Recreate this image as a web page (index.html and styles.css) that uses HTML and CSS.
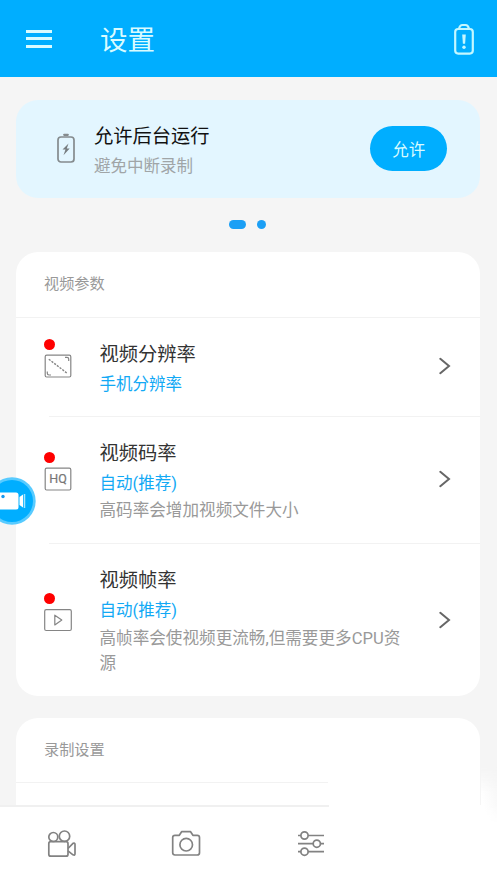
FILE: index.html
```html
<!DOCTYPE html>
<html lang="zh-CN">
<head>
<meta charset="utf-8">
<meta name="viewport" content="width=device-width, initial-scale=1">
<title>设置</title>
<link rel="stylesheet" href="styles.css">
</head>
<body>
<div class="app">
  <header class="topbar">
    <div class="menu"><span></span><span></span><span></span></div>
    <h1>设置</h1>
    <svg class="battery-alert" width="22" height="32" viewBox="0 0 22 32" fill="none" stroke="#c4f7ff" stroke-width="2.2">
      <rect x="2.2" y="6" width="17.6" height="24.6" rx="3"/>
      <path d="M6 6C6.500 3.300 8 2 9.500 2h3C14 2 15.500 3.300 16 6"/>
      <path d="M9.200 11.500h3.600l-.7 9.200h-2.200z" fill="#c4f7ff" stroke="none"/>
      <circle cx="11" cy="24.200" r="1.700" fill="#c4f7ff" stroke="none"/>
    </svg>
  </header>

  <main class="content">
    <section class="notice">
      <svg width="18" height="30" viewBox="0 0 18 30" fill="none" stroke="#858b8e" stroke-width="1.700">
        <rect x="1" y="4" width="16" height="25" rx="3"/>
        <path d="M7.200 1.800h3.600" stroke-width="2.200" stroke-linecap="round"/>
        <path d="M11.500 10.500L5.500 16.500h3L6.500 22.300l6.200-6.700H9.800z" fill="#777d80" stroke="none"/>
      </svg>
      <div class="notice-text">
        <div class="notice-title">允许后台运行</div>
        <div class="notice-sub">避免中断录制</div>
      </div>
      <button class="allow">允许</button>
    </section>
    <div class="pager"><span class="current"></span><span></span></div>

    <section class="card">
      <h2>视频参数</h2>
      <div class="row row-short">
        <div class="icon">
          <svg width="28" height="24" viewBox="0 0 28 24" fill="none" stroke="#858585" stroke-width="1.200">
            <rect x="1.200" y="1.200" width="25.600" height="21.800" rx="1.500"/>
            <path d="M4.800 5.200L22.800 19" stroke-dasharray="2.200 1.200" stroke-width="1.400"/>
            <path d="M21 3.300h2q1.700 0 1.700 1.700v2M3.300 17.500v1.800q0 1.700 1.700 1.700h2"/>
          </svg>
        </div>
        <div class="text">
          <div class="title">视频分辨率</div>
          <div class="value">手机分辨率</div>
        </div>
        <svg class="chevron" width="12" height="18" viewBox="0 0 12 18"><path d="M1.300 1.800L10 9l-8.700 7.200"/></svg>
      </div>
      <div class="row">
        <div class="icon">
          <svg width="28" height="24" viewBox="0 0 28 24" fill="none" stroke="#858585" stroke-width="1.200">
            <rect x="1.200" y="1.200" width="25.600" height="21.800" rx="1.500"/>
            <text class="hq" x="14" y="16.400" text-anchor="middle">HQ</text>
          </svg>
        </div>
        <div class="text">
          <div class="title">视频码率</div>
          <div class="value">自动(推荐)</div>
          <div class="desc">高码率会增加视频文件大小</div>
        </div>
        <svg class="chevron" width="12" height="18" viewBox="0 0 12 18"><path d="M1.300 1.800L10 9l-8.700 7.200"/></svg>
      </div>
      <div class="row">
        <div class="icon">
          <svg width="28" height="24" viewBox="0 0 28 24" fill="none" stroke="#858585" stroke-width="1.200">
            <rect x=".7" y="1.700" width="26.600" height="20.800" rx="1.500"/>
            <path d="M10.800 7.200v9.800l7-4.900z" stroke-linejoin="round"/>
          </svg>
        </div>
        <div class="text">
          <div class="title">视频帧率</div>
          <div class="value">自动(推荐)</div>
          <div class="desc">高帧率会使视频更流畅,但需要更多CPU资源</div>
        </div>
        <svg class="chevron" width="12" height="18" viewBox="0 0 12 18"><path d="M1.300 1.800L10 9l-8.700 7.200"/></svg>
      </div>
    </section>

    <section class="card card-next">
      <h2>录制设置</h2>
      <div class="short-line"></div>
    </section>
  </main>

  <nav class="tabs">
    <svg width="30" height="28" viewBox="0 0 30 28" fill="none" stroke="#828282" stroke-width="1.700" stroke-linejoin="round">
      <rect x="1.800" y="11.700" width="19.200" height="14.500" rx="2"/>
      <circle cx="6.300" cy="7" r="4.500"/>
      <circle cx="17.500" cy="6.200" r="5.200"/>
      <path d="M21 18.500l5-5.200q2-.8 2 1v9.500q0 1.800-2 1l-5-4"/>
    </svg>
    <svg width="30" height="28" viewBox="0 0 30 28" fill="none" stroke="#828282" stroke-width="1.700" stroke-linejoin="round">
      <path d="M4 5.300h4.300l2.300-3.600h9l2.300 3.600h4.300q2.300 0 2.300 2.300v15.100q0 2.300-2.300 2.300H4q-2.300 0-2.300-2.300V7.600Q1.700 5.300 4 5.300z"/>
      <circle cx="15.200" cy="14.700" r="6.300"/>
    </svg>
    <svg width="30" height="28" viewBox="0 0 30 28" fill="none" stroke="#828282" stroke-width="1.700">
      <path d="M2 5.500h3M12 5.500h16M2 13.700h15M24.500 13.700H28M2 21.700h3M12 21.700h16"/>
      <circle cx="8.500" cy="5.500" r="3.600"/><circle cx="20.800" cy="13.700" r="3.600"/><circle cx="8.500" cy="21.700" r="3.600"/>
    </svg>
  </nav>

  <div class="edge-fade"></div>
  <div class="recorder">
    <svg width="48" height="48" viewBox="0 0 48 48">
      <circle cx="24" cy="24" r="23.700" fill="#58cbff"/>
      <circle cx="24" cy="24" r="21" fill="#00aeff"/>
      <rect x="8" y="15.500" width="22.500" height="17" rx="2.500" fill="#fff"/>
      <path d="M31.500 20l3.500-2.500v13L31.500 28z" fill="#fff"/>
      <path d="M36.500 17v14" stroke="#a6e4ff" stroke-width="1.500"/>
      <circle cx="15" cy="19.500" r="1.700" fill="#1599ef"/>
    </svg>
  </div>
</div>
</body>
</html>
```
FILE: styles.css
```css
* { box-sizing: border-box; }

body {
  margin: 0;
  font-family: Roboto, "Noto Sans CJK SC", sans-serif;
  background: #f5f5f5;
}

svg { display: block; flex: none; }

.app {
  position: relative;
  display: flex;
  flex-direction: column;
  height: 884px;
  overflow: hidden;
}

.topbar {
  display: flex;
  flex: none;
  align-items: center;
  height: 77px;
  padding: 0 22px 0 26px;
  background: #00aeff;
}

.menu { display: grid; gap: 4.5px; width: 26px; }
.menu span { height: 3px; background: #d9fbff; }

h1 {
  flex: 1;
  margin: 4px 0 0 48px;
  font-size: 27.5px;
  font-weight: 400;
  line-height: 40px;
  color: #d9fbff;
}

.content {
  flex: 1;
  min-height: 0;
  padding: 22.5px 16.6px 0 16.4px;
  overflow: hidden;
}

.notice {
  display: flex;
  align-items: center;
  height: 98.5px;
  padding: 0 33px 0 40.6px;
  border-radius: 22px;
  background: #e3f6ff;
}

.notice > svg { margin-top: -2px; }
.notice-text { flex: 1; margin: 4.5px 0 0 19px; }
.notice-title { font-size: 19.25px; line-height: 32px; color: #111; }
.notice-sub { font-size: 16.5px; line-height: 28px; color: #a0a5a7; }

.allow {
  width: 77.5px;
  height: 45px;
  padding: 0;
  border: 0;
  border-radius: 23px;
  background: #00aeff;
  color: #d9fbff;
  font: inherit;
  font-size: 16.5px;
}

.pager {
  display: flex;
  justify-content: center;
  gap: 11px;
  padding: 22px 2px 23.5px 0;
}
.pager span { width: 8.5px; height: 8.5px; border-radius: 5px; background: #1b9ff5; }
.pager .current { width: 17px; }

.card { border-radius: 22px; background: #fff; }
.card-next { height: 110px; margin-top: 22px; }

h2 {
  margin: 0;
  padding: 1px 0 0 27.6px;
  font-size: 15.2px;
  font-weight: 400;
  line-height: 63.6px;
  color: #999;
}

.row {
  position: relative;
  display: flex;
  align-items: center;
  padding: 0 29.4px 0 27.6px;
}
.row::before {
  content: "";
  position: absolute;
  top: 0;
  left: 33px;
  right: 0;
  height: 1px;
  background: #f2f2f2;
}
h2 + .row::before { left: 0; }

.icon { position: relative; }
.icon::before {
  content: "";
  position: absolute;
  top: -15px;
  left: 0;
  width: 11px;
  height: 11px;
  border-radius: 50%;
  background: #f00;
}
.hq { font: 400 12.5px Roboto, sans-serif; fill: #777; stroke: #777; stroke-width: .2; }

.text { flex: 0 0 310px; margin-left: 27.5px; padding: 22px 0 19.5px; }
.row-short .text { padding-bottom: 18px; }
.title { font-size: 19.25px; line-height: 32px; color: #333; }
.value { font-size: 16.5px; line-height: 27px; color: #12a9f5; }
.desc { margin-top: 2.5px; font-size: 16.6px; line-height: 24.7px; color: #999; }

.chevron { margin-left: auto; fill: none; stroke: #666; stroke-width: 2; stroke-linecap: round; }

.short-line { width: 312px; height: 1px; background: #f2f2f2; }

.tabs {
  display: flex;
  flex: none;
  gap: 94.5px;
  height: 79.5px;
  padding: 25.5px 0 0 46.6px;
  background: linear-gradient(#f0f0f0, #f0f0f0) 0 0 / 329px 2px no-repeat, #fff;
}

.edge-fade {
  position: absolute;
  right: 0;
  top: 766px;
  width: 16px;
  height: 60px;
  background: linear-gradient(75deg, #fff 25%, #f5f5f5 100%);
  -webkit-mask-image: linear-gradient(transparent, #000 45%, #000 65%, transparent);
  mask-image: linear-gradient(transparent, #000 45%, #000 65%, transparent);
}

.recorder { position: absolute; left: -12px; top: 476.5px; }
```
